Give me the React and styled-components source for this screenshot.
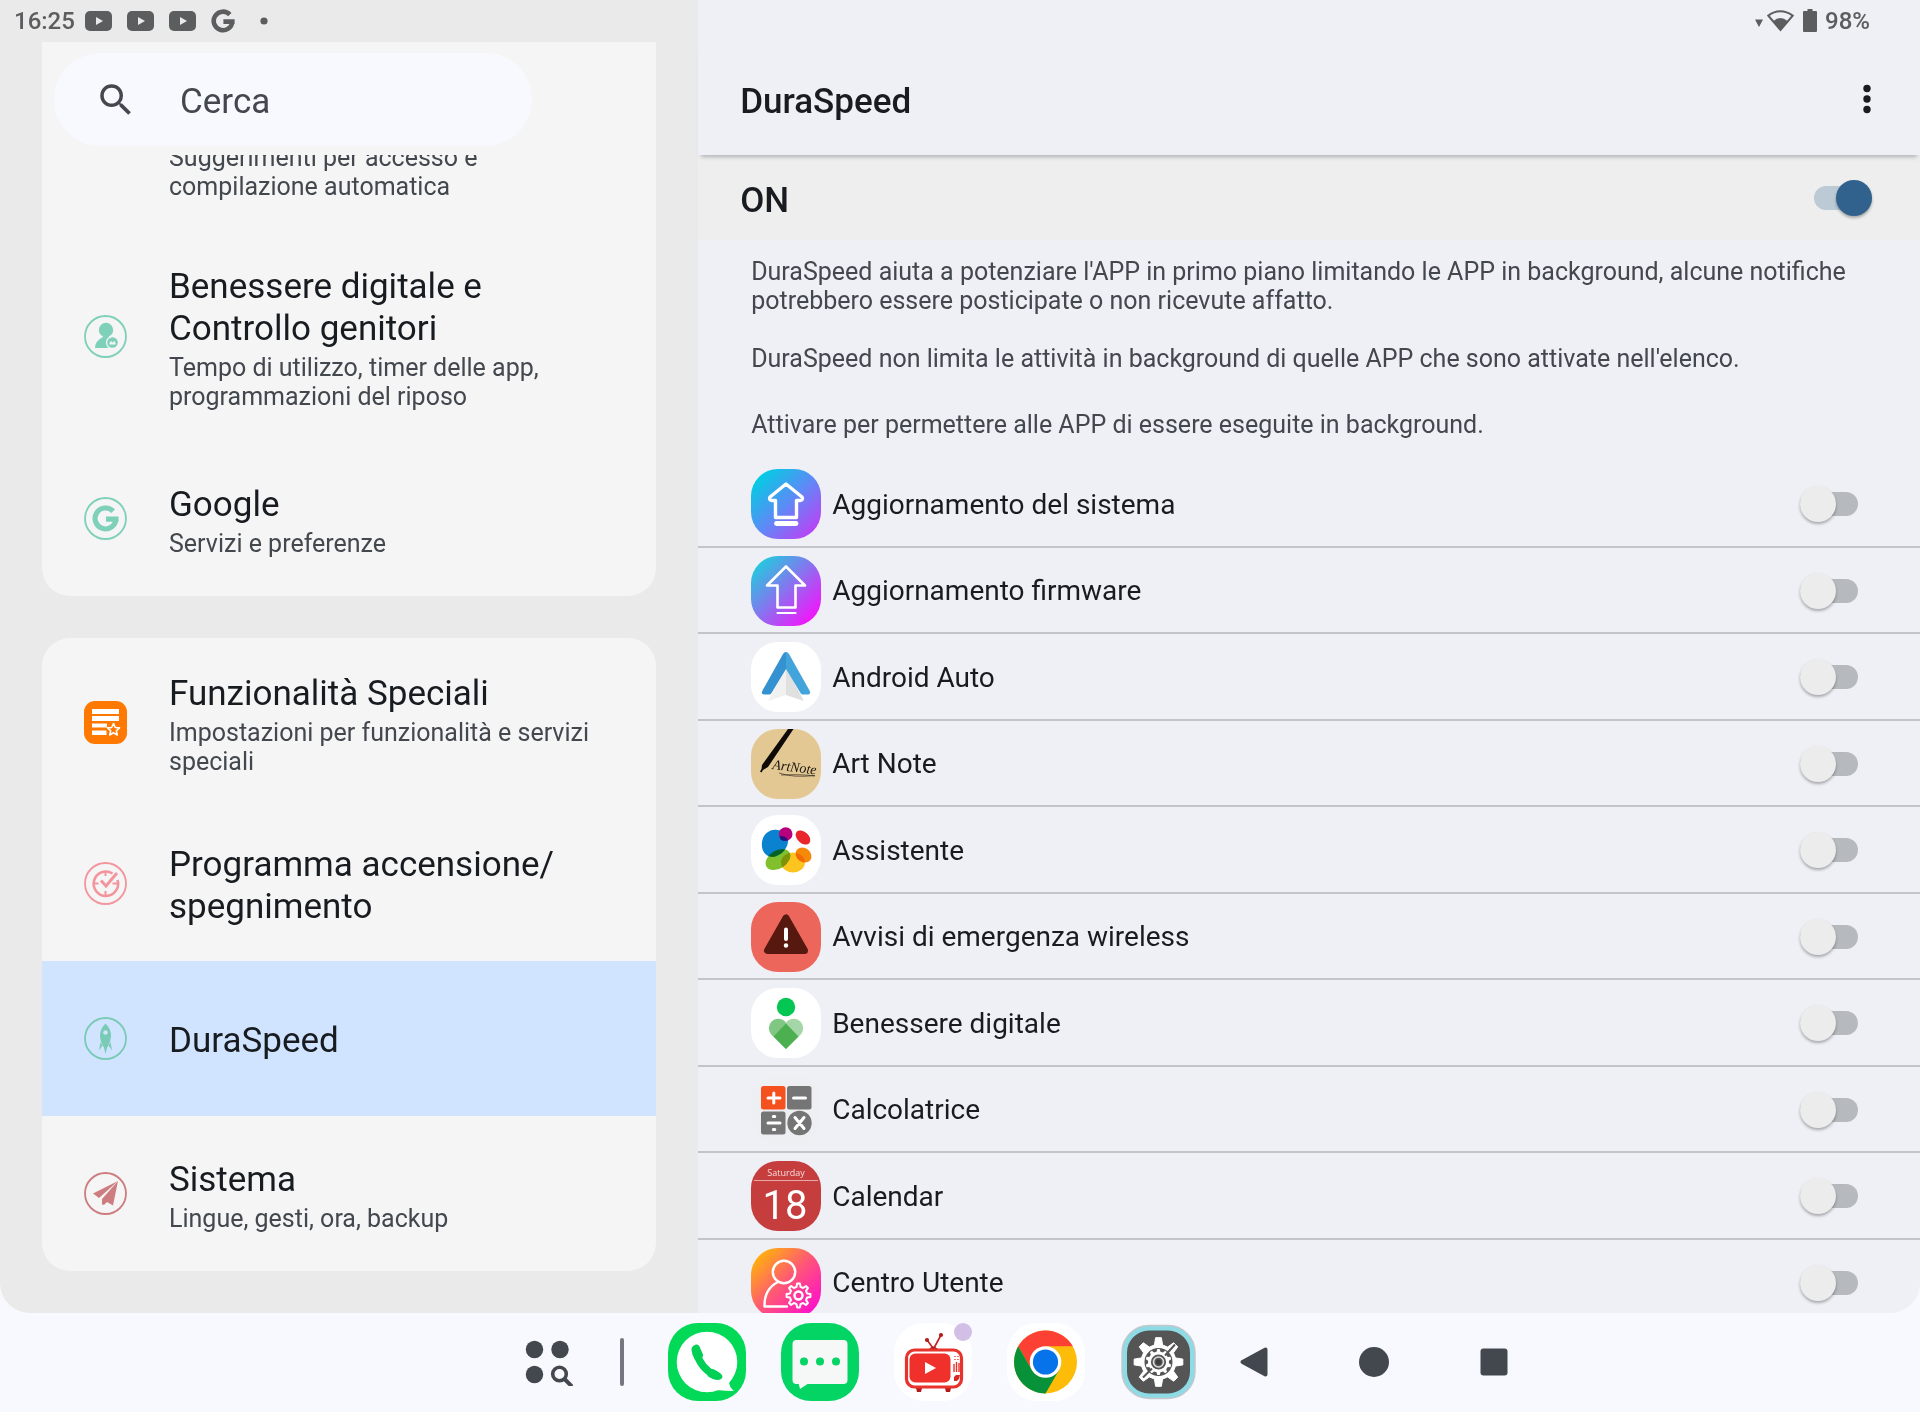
import React, { useState } from 'react'
import styled, { createGlobalStyle } from 'styled-components'

const GlobalStyle = createGlobalStyle`
* {
  box-sizing: border-box;
}
body {
  margin: 0;
  background: #f8f9ff;
  color: #181c20;
  font-family: Roboto, "Liberation Sans", sans-serif;
}
`

const Page = styled.div`
  height: 100vh;
  display: grid;
  grid-template-rows: minmax(0, 1fr) auto;
`
const Screen = styled.div`
  display: grid;
  grid-template-columns: 4fr 7fr;
  grid-template-rows: minmax(0, 1fr);
  border-radius: 0 0 30px 30px;
  overflow: hidden;
`
const StatusBar = styled.div`
  height: 42px;
  flex: none;
  display: flex;
  align-items: center;
  justify-content: ${props => (props.$end ? 'flex-end' : 'flex-start')};
  padding: ${props => (props.$end ? '0 50px 0 0' : '0 0 0 14px')};
  color: #5c5d5f;
  font-size: 24px;
  font-weight: 500;
  line-height: 29px;
`
const Notices = styled.div`
  display: flex;
  align-items: center;
  gap: 15px;
  padding-left: 10px;
`
const Signals = styled.div`
  display: flex;
  align-items: center;
  gap: 8px;
`

/* left pane */
const Sidebar = styled.aside`
  display: flex;
  flex-direction: column;
  min-width: 0;
  background: #eaeaea;
`
const SearchArea = styled.div`
  flex: none;
  margin: 0 42px;
  padding: 11px 124px 9px 12px;
  background: #f5f5f5;
`
const SearchBox = styled.label`
  height: 93px;
  display: flex;
  align-items: center;
  gap: 43px;
  padding: 0 41px;
  border-radius: 47px;
  background: #f8f9ff;
  color: #43474e;
`
const SearchInput = styled.input`
  flex: 1;
  min-width: 0;
  padding: 5px 0 0;
  border: 0;
  outline: 0;
  background: none;
  font-family: inherit;
  font-size: 35px;
  line-height: 42px;
  color: #43474e;
  &::placeholder {
    color: #43474e;
    opacity: 1;
  }
`
/* the list is scrolled to its end, the first entry is cut by the search area */
const Cards = styled.nav`
  flex: 1;
  min-height: 0;
  display: flex;
  flex-direction: column;
  justify-content: flex-end;
  gap: 42px;
  padding: 0 42px 42px;
  overflow: hidden;
`
const Card = styled.div`
  flex: none;
  border-radius: ${props => (props.$open ? '0 0 28px 28px' : '28px')};
  background: #f5f5f5;
  overflow: hidden;
`
const Item = styled.a`
  min-height: ${props => (props.$cut ? '0' : '155px')};
  display: flex;
  align-items: center;
  gap: 42px;
  padding: ${props => (props.$cut ? '0' : '30px')} 42px 30px;
  background: ${props => (props.$active ? '#d1e4ff' : 'transparent')};
  color: #181c20;
  text-decoration: none;
`
const ItemIcon = styled.span`
  width: 43px;
  flex: none;
  display: flex;
`
const ItemBody = styled.span`
  display: flex;
  flex-direction: column;
  gap: 3px;
  padding-top: 5px;
`
const ItemTitle = styled.span`
  font-size: 35px;
  line-height: 42px;
`
const ItemText = styled.span`
  font-size: 25px;
  line-height: 29px;
  color: #43474e;
`

/* right pane */
const Content = styled.main`
  display: flex;
  flex-direction: column;
  min-width: 0;
  background: #eff0f6;
`
const Header = styled.header`
  height: 113px;
  flex: none;
  display: flex;
  align-items: center;
  justify-content: space-between;
  padding: 0 32px 0 42px;
  z-index: 1;
  box-shadow: 0 5px 4px -3px rgba(0, 0, 0, 0.25);
`
const Title = styled.h1`
  margin: 0;
  padding-top: 6px;
  font-size: 35px;
  font-weight: 500;
  line-height: 42px;
`
const MenuButton = styled.button`
  display: flex;
  padding: 0;
  border: 0;
  background: none;
  color: #181c20;
`
const MasterBar = styled.label`
  height: 85px;
  flex: none;
  display: flex;
  align-items: center;
  justify-content: space-between;
  padding: 0 48px 0 42px;
  background: #eeeeee;
`
const MasterText = styled.span`
  padding-top: 6px;
  font-size: 35px;
  font-weight: 500;
  line-height: 42px;
`
const Notes = styled.div`
  flex: none;
  padding: 17px 50px 22px 53px;
  color: #43474e;
  font-size: 25px;
  line-height: 29px;
`
const Note = styled.p`
  margin: 0 0 ${props => props.$gap || 0}px;
`
const AppList = styled.ul`
  flex: 1;
  min-height: 0;
  display: grid;
  grid-auto-rows: minmax(86px, 1fr);
  margin: 0 0 -13px;
  padding: 0;
  list-style: none;
`
const AppItem = styled.li`
  border-bottom: 2px solid #c2c4ca;
`
const AppRow = styled.label`
  height: 100%;
  display: flex;
  align-items: center;
  gap: 11px;
  padding: 2px 62px 0 53px;
`
const AppName = styled.span`
  flex: 1;
  font-size: 28px;
  line-height: 33px;
`
const Switch = styled.input`
  appearance: none;
  width: 58px;
  height: 24px;
  flex: none;
  display: flex;
  align-items: center;
  justify-content: flex-start;
  margin: 0;
  border-radius: 12px;
  background: #b6b9be;
  &::before {
    content: "";
    width: 36px;
    height: 36px;
    flex: none;
    border-radius: 50%;
    background: #ececec;
    box-shadow: 0 2px 3px rgba(0, 0, 0, 0.3);
  }
  &:checked {
    justify-content: flex-end;
    background: #bccad6;
  }
  &:checked::before {
    background: #31628d;
  }
`

/* bottom bar */
const Taskbar = styled.footer`
  height: 99px;
  display: flex;
  align-items: center;
  justify-content: center;
  padding: 0 0 2px 119px;
  color: #43474e;
`
const Divider = styled.span`
  width: 4px;
  height: 48px;
  margin: 0 44px 0 47px;
  border-radius: 2px;
  background: #74777f;
`
const Dock = styled.div`
  display: flex;
  gap: 35px;
`
const NavKeys = styled.div`
  display: flex;
  gap: 80px;
  padding-left: 36px;
`
const IconButton = styled.button`
  display: flex;
  padding: 0;
  border: 0;
  background: none;
  color: inherit;
`

const gearPath = (cx, cy, teeth, outer, inner) => {
  const step = (Math.PI * 2) / teeth
  const at = (a, r) => `${(cx + Math.cos(a) * r).toFixed(2)} ${(cy + Math.sin(a) * r).toFixed(2)}`
  let d = ''
  for (let i = 0; i < teeth; i++) {
    const a = i * step - Math.PI / 2
    d += `${i ? 'L' : 'M'}${at(a - step * 0.3, inner)}L${at(a - step * 0.15, outer)}`
    d += `L${at(a + step * 0.15, outer)}L${at(a + step * 0.3, inner)}`
  }
  return d + 'Z'
}

const GLetter = ({ size, x, y }) => (
  <svg width={size} height={size} x={x} y={y} viewBox="0 0 24 24" fill="none" stroke="currentColor" strokeWidth="4.6">
    <path d="M18.8 5.6A9.3 9.3 0 1 0 21.3 12.6M12.4 12.6H23.6" />
  </svg>
)
const VideoNotice = () => (
  <svg width="27" height="20" viewBox="0 0 27 20">
    <rect width="27" height="20" rx="5" fill="currentColor" />
    <path d="M11 6v8l7-4z" fill="#eaeaea" />
  </svg>
)
const DotNotice = () => (
  <svg width="30" height="10" viewBox="0 0 30 10">
    <circle cx="14" cy="5" r="3.6" fill="currentColor" />
  </svg>
)
const WifiIcon = () => (
  <svg width="40" height="24" viewBox="0 0 40 24" fill="currentColor">
    <path d="M0 10.500h8l-4 7.500z" />
    <path d="M13.300 6.600Q25.500-2 37.700 6.600L25.500 21z" fill="none" stroke="currentColor" strokeWidth="2" />
    <path d="M18.500 12Q25.500 6 32.500 12L25.500 21z" />
  </svg>
)
const BatteryIcon = () => (
  <svg width="14" height="24" viewBox="0 0 14 24" fill="currentColor">
    <path d="M4.500 0h5v2H13a1 1 0 0 1 1 1v19a1 1 0 0 1-1 1H1a1 1 0 0 1-1-1V3a1 1 0 0 1 1-1h3.500z" />
  </svg>
)
const SearchIcon = () => (
  <svg width="42" height="42" viewBox="0 0 24 24" fill="currentColor">
    <path d="M15.500 14h-.790l-.280-.270A6.470 6.470 0 0 0 16 9.500 6.500 6.500 0 1 0 9.500 16c1.610 0 3.090-.590 4.230-1.570l.270.280v.790l5 4.990L20.490 19zm-6 0C7.010 14 5 11.990 5 9.500S7.010 5 9.500 5 14 7.010 14 9.500 11.990 14 9.500 14z" />
  </svg>
)
const MoreIcon = () => (
  <svg width="42" height="42" viewBox="0 0 42 42" fill="currentColor">
    <circle cx="21" cy="10.500" r="3.700" />
    <circle cx="21" cy="21" r="3.700" />
    <circle cx="21" cy="31.500" r="3.700" />
  </svg>
)

const Ring = ({ color, children }) => (
  <svg width="43" height="43" viewBox="0 0 43 43" color={color} fill="currentColor">
    <circle cx="21.500" cy="21.500" r="20.500" fill="none" stroke="currentColor" strokeWidth="1.800" />
    {children}
  </svg>
)
const WellbeingIcon = () => (
  <Ring color="#7fd0b9">
    <circle cx="22" cy="15" r="7.200" />
    <path d="M19 20h6v4l4 9H11q0-7 8-11z" />
    <circle cx="28.500" cy="27.500" r="6.600" fill="#f5f5f5" />
    <circle cx="28.500" cy="27.500" r="5.300" />
    <path d="M25.500 28.500h6M27 26.500v2.500M30 26.500v2.500" stroke="#f5f5f5" strokeWidth="1.800" />
  </Ring>
)
const GoogleIcon = () => (
  <Ring color="#7fd0b9">
    <GLetter size="27" x="8" y="8" />
  </Ring>
)
const FeaturesIcon = () => (
  <svg width="43" height="43" viewBox="0 0 43 43">
    <rect width="43" height="43" rx="11" fill="#ff7900" />
    <path d="M8 8h27v5H8zM8 15h27v5H8zM8 22.500h15v4H8zM8 29.500h14.500v4.500H8z" fill="#fff" />
    <path d="M29.500 22.500l1.800 4 4.200.400-3.200 2.900 1 4.200-3.800-2.200-3.800 2.200 1-4.200-3.200-2.900 4.200-.400z" fill="#ff7900" stroke="#fff" strokeWidth="1.600" strokeLinejoin="round" />
  </svg>
)
const ClockIcon = () => (
  <Ring color="#f2959c">
    <g fill="none" stroke="currentColor" strokeWidth="2.600">
      <path d="M28.500 11.500A12.200 12.200 0 1 0 33.500 18" />
      <path d="M21.500 9v5M21.500 29v5M9.500 21.500h5M28.500 21.500h5" strokeWidth="2" />
      <path d="M17 18.500l5 5.500L33 11" strokeWidth="3" />
    </g>
  </Ring>
)
const RocketIcon = () => (
  <Ring color="#79cbb5">
    <path d="M21.500 6.500c4 4 5.500 8 5.500 12 0 4-1.500 8-3.500 11.500h-4C17.500 26.500 16 22.500 16 18.500c0-4 1.500-8 5.500-12z" />
    <path d="M16.500 25l-1.500 8.500 3.500-5zM26.500 25l1.500 8.500-3.500-5zM19.500 29h4l-2 8z" />
    <circle cx="21.500" cy="15.500" r="2.300" fill="#d1e4ff" />
  </Ring>
)
const PlaneIcon = () => (
  <Ring color="#cd7d80">
    <path d="M34 9L9 21.500l6 4.500z" />
    <path d="M34 9L18 27v5.500q2 1 3.500-1l1.500-1.500 6 3.500z" />
  </Ring>
)

const Tile = ({ fill, children }) => (
  <svg width="70" height="70" viewBox="0 0 70 70">
    <rect width="70" height="70" rx="27" fill={fill} />
    {children}
  </svg>
)
const Gradient = ({ id, stops }) => (
  <linearGradient id={id} x1="0.1" y1="0.1" x2="0.9" y2="0.9">
    {stops.map((color, i) => (
      <stop key={color} offset={i / (stops.length - 1)} stopColor={color} />
    ))}
  </linearGradient>
)
const SystemUpdateIcon = () => (
  <Tile fill="url(#system)">
    <Gradient id="system" stops={['#00cee2', '#5b8cf6', '#bb42f6']} />
    <g fill="none" stroke="#fff" strokeLinejoin="round" strokeLinecap="round">
      <path d="M35 15L51 28q1.500 3-2 3.500h-3.500V48.500h-21V31.500H21q-3.500-.500-2-3.500z" strokeWidth="3.400" />
      <path d="M25.500 54.500h19.500" strokeWidth="4.800" />
    </g>
  </Tile>
)
const FirmwareIcon = () => (
  <Tile fill="url(#firmware)">
    <Gradient id="firmware" stops={['#22cade', '#8c70f0', '#f513fb']} />
    <g fill="none" stroke="#fff" strokeLinejoin="round" strokeLinecap="round">
      <path d="M35 10.500L54 29.500H44.500V51.500H26.500V29.500H16z" strokeWidth="2.600" />
      <path d="M26.500 57h18" strokeWidth="2.200" />
    </g>
  </Tile>
)
const AndroidAutoIcon = () => (
  <Tile fill="#fff">
    <path d="M35 26L17 59l18-6z" fill="#f1f1f1" />
    <path d="M35 26l18 33-18-6z" fill="#e0e0e0" />
    <path d="M32 12q1.200-2 3-2V27L20.500 51q-.800 1.500-2.500 1.500h-4.500q-4 0-2-4z" fill="#3592d0" />
    <path d="M38 12q-1.200-2-3-2V27L49.500 51q.800 1.500 2.500 1.500h4.500q4 0 2-4z" fill="#43a4dc" />
  </Tile>
)
const ArtNoteIcon = () => (
  <Tile fill="#e4c893">
    <path d="M37 0h5.500L17 38l-5 3-1.500 2.500-1.500-1 1.500-2.500.500-4z" fill="#0d0a08" />
    <text x="21" y="40" transform="rotate(7 21 40)" fontFamily="Liberation Serif, serif" fontStyle="italic" fontSize="14" fill="#1c1814">ArtNote</text>
    <path d="M28 44q14 5 36 2.500M30 46q20-1 34 1" fill="none" stroke="#1c1814" strokeWidth="0.600" />
  </Tile>
)
const blend = { mixBlendMode: 'multiply' }
const AssistantIcon = () => (
  <Tile fill="#fff">
    <path d="M11 27c1-8 8-13 15-12 8 0 12 5 11 12-1 8-8 14-15 15-8 0-12-7-11-15z" fill="#0a82d0" />
    <circle cx="34.700" cy="19" r="6.800" fill="#b6007c" />
    <path d="M28.500 21.500a6.800 6.800 0 0 1 8.500 3.800q-3 1-6 .200-2.500-1.500-2.500-4z" fill="#27127c" />
    <ellipse cx="52" cy="22.500" rx="8.500" ry="5.600" transform="rotate(42 52 22.500)" fill="#e8262b" />
    <ellipse cx="27" cy="44.500" rx="13.500" ry="9" transform="rotate(-32 27 44.500)" fill="#7fc02c" style={blend} />
    <ellipse cx="42" cy="47.500" rx="12" ry="10" fill="#fcc41f" style={blend} />
    <ellipse cx="52.500" cy="40" rx="8.500" ry="7" transform="rotate(38 52.500 40)" fill="#f58a0a" style={blend} />
  </Tile>
)
const AlertIcon = () => (
  <Tile fill="#ed665b">
    <path d="M35 16L16.500 48.500h37z" fill="#57180f" stroke="#57180f" strokeWidth="7" strokeLinejoin="round" />
    <path d="M35 27.500v9.500" stroke="#fff" strokeWidth="4" strokeLinecap="round" />
    <circle cx="35" cy="43.500" r="2.200" fill="#fff" />
  </Tile>
)
const DigitalWellbeingIcon = () => (
  <Tile fill="#fff">
    <circle cx="35" cy="19" r="9.200" fill="#04c653" />
    <path d="M35 61L19.800 46A9.500 9.500 0 0 1 33 32.600L35 34.600z" fill="#81c784" />
    <path d="M35 61L50.200 46A9.500 9.500 0 0 0 37 32.600L35 34.600z" fill="#a5d6a7" />
    <path d="M35 35.500L47.500 48.500 35 61 22.500 48.500z" fill="#4caf50" />
  </Tile>
)
const CalculatorIcon = () => (
  <Tile fill="#eeeff2">
    <rect x="10" y="11" width="24.500" height="23.500" rx="2.500" fill="#f4511e" />
    <rect x="36" y="11" width="24.500" height="23.500" rx="2.500" fill="#757575" />
    <rect x="10" y="36.500" width="24.500" height="23" rx="2.500" fill="#757575" />
    <circle cx="48.500" cy="48" r="12.200" fill="#757575" />
    <path d="M17 23h12M22.800 18v10M42.500 23h12M17 48h12M22.300 41.500h1.500M22.300 54.500h1.500M44 42.500l9 11M53 42.500l-9 11" stroke="#fff" strokeWidth="3" strokeLinecap="round" />
  </Tile>
)
const CalendarIcon = () => (
  <Tile fill="#c53d3d">
    <text x="35" y="15" textAnchor="middle" fontFamily="Open Sans, sans-serif" fontSize="9" fill="#f6dcdc">Saturday</text>
    <path d="M3 19.500h64" stroke="#e9a9a9" />
    <text x="34" y="58" textAnchor="middle" fontFamily="Roboto, sans-serif" fontSize="40" fill="#fff">18</text>
  </Tile>
)
const UserCenterIcon = () => (
  <Tile fill="url(#user)">
    <Gradient id="user" stops={['#ffb10c', '#ff5578', '#ff10ca']} />
    <g fill="none" stroke="#fff" strokeWidth="2.400" strokeLinejoin="round" strokeLinecap="round">
      <circle cx="33" cy="24" r="11.200" />
      <path d="M27 34Q13 41 13.500 58.500H36" />
      <path d={gearPath(47.500, 47.500, 8, 12, 8.800)} strokeWidth="2" />
      <circle cx="47.500" cy="47.500" r="4" />
    </g>
  </Tile>
)

const DockTile = ({ fill, children }) => (
  <svg width="78" height="78" viewBox="0 0 78 78">
    <rect width="78" height="78" rx="30" fill={fill} />
    {children}
  </svg>
)
const PhoneIcon = () => (
  <DockTile fill="#02d956">
    <circle cx="39" cy="39" r="30.300" fill="#fff" />
    <path d="M49 67q8 1 17 1-5-4-5-10z" fill="#fff" />
    <path d="M28.500 29Q32 45 48 53" fill="none" stroke="#02d056" strokeWidth="7.500" />
    <path d="M23.500 27q-.500-4 4.500-5.500 2.500-.500 3.500 2l3.500 8q.500 2.500-3 4.500l-5 1q-3-5-3.500-10zM54 52q-2.500-3-9-6-2.500-.500-4.500 3l-1 4q6 4 10 4 4 0 5-3z" fill="#02d056" />
  </DockTile>
)
const MessagesIcon = () => (
  <DockTile fill="#03d464">
    <rect x="11.500" y="17" width="55" height="44" rx="4" fill="#f5f8f7" />
    <path d="M17.500 60l1.500 6 9-6z" fill="#f5f8f7" />
    <g fill="#03d464">
      <circle cx="23" cy="38.500" r="4" />
      <circle cx="39" cy="38.500" r="4" />
      <circle cx="55" cy="38.500" r="4" />
    </g>
  </DockTile>
)
const TvIcon = () => (
  <DockTile fill="#fff">
    <path d="M33 17l6 8M47 12l-7 13" stroke="#c41f1f" strokeWidth="1.600" />
    <circle cx="33" cy="17" r="2.100" fill="#b51a1a" />
    <circle cx="47" cy="12" r="2.100" fill="#b51a1a" />
    <path d="M35 26q4-5 9 0zM22 65h6l-1 4h-4zM51 65h6l-1 4h-4z" fill="#b51a1a" />
    <rect x="12.500" y="27" width="55" height="37" rx="8" fill="#fff" stroke="#e7332c" strokeWidth="3.200" />
    <rect x="15.500" y="30.500" width="41" height="29" rx="6" fill="#f0312b" />
    <path d="M31 39v12l11-6z" fill="#fff" />
    <path d="M61 33v1M61 36v1M64 33v1M64 36v1M60 41v8M62.500 39v10M65 40v9" stroke="#e7332c" strokeWidth="1.400" />
    <path d="M60 54l2-2h4l-1 4-2 2h-3z" fill="#d62a25" />
    <circle cx="69" cy="9" r="9" fill="#d2bfe5" />
  </DockTile>
)
const ChromeIcon = () => (
  <DockTile fill="#fff">
    <circle cx="38.500" cy="39" r="31.500" fill="#fdbc08" />
    <path d="M11.200 23.300A31.500 31.500 0 0 1 65.800 23.300H38.500L24.900 46.900z" fill="#fc4134" />
    <path d="M11.200 23.300A31.500 31.500 0 0 0 38.500 70.500L52.100 46.900 24.900 46.900z" fill="#079239" />
    <circle cx="38.500" cy="39" r="15.800" fill="#fff" />
    <circle cx="38.500" cy="39" r="12.600" fill="#0673ea" />
  </DockTile>
)
const SettingsIcon = () => (
  <svg width="78" height="78" viewBox="0 0 78 78">
    <rect x="2" y="2.500" width="73" height="73" rx="27" fill="#8cdbe5" stroke="#c3c8cc" strokeWidth="1.500" />
    <rect x="7" y="7.500" width="63" height="63" rx="22" fill="#555" />
    <path d={gearPath(38.500, 39, 8, 24.500, 17.500)} fill="#fff" stroke="#fff" strokeWidth="1" strokeLinejoin="round" />
    <circle cx="38.500" cy="39" r="14" fill="#555" />
    <path d={gearPath(38.500, 39, 10, 13, 10.500)} fill="#fff" />
    <path d="M23 54.500L32 45.500M45 32.500L55 21.500" stroke="#555" strokeWidth="2" />
    <circle cx="38.500" cy="39" r="7.600" fill="#555" />
    <circle cx="38.500" cy="39" r="5" fill="none" stroke="#ddd" strokeWidth="1.600" />
    <circle cx="38.500" cy="39" r="2.600" fill="#3c3c3c" />
  </svg>
)
const AllAppsIcon = () => (
  <svg width="48" height="48" viewBox="0 0 48 48" fill="currentColor">
    <circle cx="9.500" cy="11.500" r="8.700" />
    <circle cx="35" cy="11.500" r="8.700" />
    <circle cx="9.500" cy="36.500" r="8.700" />
    <circle cx="34.500" cy="36" r="6.800" fill="none" stroke="currentColor" strokeWidth="3.600" />
    <path d="M39.500 41l7.500 7.500" stroke="currentColor" strokeWidth="4" />
  </svg>
)
const BackIcon = () => (
  <svg width="40" height="40" viewBox="0 0 40 40">
    <path d="M8.500 20L31.500 7.500V32.500z" fill="currentColor" stroke="currentColor" strokeWidth="4" strokeLinejoin="round" />
  </svg>
)
const HomeIcon = () => (
  <svg width="40" height="40" viewBox="0 0 40 40">
    <circle cx="20" cy="20" r="15" fill="currentColor" />
  </svg>
)
const RecentIcon = () => (
  <svg width="40" height="40" viewBox="0 0 40 40">
    <rect x="6.500" y="6.500" width="27" height="27" rx="3" fill="currentColor" />
  </svg>
)

const general = [
  { id: 'passwords', text: 'Suggerimenti per accesso e compilazione automatica', cut: true },
  { id: 'wellbeing', icon: <WellbeingIcon />, title: 'Benessere digitale e Controllo genitori', text: 'Tempo di utilizzo, timer delle app, programmazioni del riposo' },
  { id: 'google', icon: <GoogleIcon />, title: 'Google', text: 'Servizi e preferenze' },
]
const system = [
  { id: 'features', icon: <FeaturesIcon />, title: 'Funzionalità Speciali', text: 'Impostazioni per funzionalità e servizi speciali' },
  { id: 'power', icon: <ClockIcon />, title: <>Programma accensione/<wbr />spegnimento</> },
  { id: 'duraspeed', icon: <RocketIcon />, title: 'DuraSpeed', active: true },
  { id: 'system', icon: <PlaneIcon />, title: 'Sistema', text: 'Lingue, gesti, ora, backup' },
]
const apps = [
  { name: 'Aggiornamento del sistema', icon: <SystemUpdateIcon /> },
  { name: 'Aggiornamento firmware', icon: <FirmwareIcon /> },
  { name: 'Android Auto', icon: <AndroidAutoIcon /> },
  { name: 'Art Note', icon: <ArtNoteIcon /> },
  { name: 'Assistente', icon: <AssistantIcon /> },
  { name: 'Avvisi di emergenza wireless', icon: <AlertIcon /> },
  { name: 'Benessere digitale', icon: <DigitalWellbeingIcon /> },
  { name: 'Calcolatrice', icon: <CalculatorIcon /> },
  { name: 'Calendar', icon: <CalendarIcon /> },
  { name: 'Centro Utente', icon: <UserCenterIcon /> },
]

const SettingsItem = ({ icon, title, text, active, cut }) => (
  <Item href="#" $active={active} $cut={cut}>
    <ItemIcon>{icon}</ItemIcon>
    <ItemBody>
      {title && <ItemTitle>{title}</ItemTitle>}
      {text && <ItemText>{text}</ItemText>}
    </ItemBody>
  </Item>
)

const App = () => {
  const [on, setOn] = useState(true)

  return (
    <Page>
      <GlobalStyle />
      <Screen>
        <Sidebar>
          <StatusBar>
            16:25
            <Notices>
              <VideoNotice />
              <VideoNotice />
              <VideoNotice />
              <GLetter size="24" />
              <DotNotice />
            </Notices>
          </StatusBar>
          <SearchArea>
            <SearchBox>
              <SearchIcon />
              <SearchInput type="text" placeholder="Cerca" aria-label="Cerca" />
            </SearchBox>
          </SearchArea>
          <Cards>
            <Card $open>
              {general.map(({ id, ...item }) => <SettingsItem key={id} {...item} />)}
            </Card>
            <Card>
              {system.map(({ id, ...item }) => <SettingsItem key={id} {...item} />)}
            </Card>
          </Cards>
        </Sidebar>
        <Content>
          <StatusBar $end>
            <Signals>
              <WifiIcon />
              <BatteryIcon />
              98%
            </Signals>
          </StatusBar>
          <Header>
            <Title>DuraSpeed</Title>
            <MenuButton aria-label="Altre opzioni">
              <MoreIcon />
            </MenuButton>
          </Header>
          <MasterBar>
            <MasterText>ON</MasterText>
            <Switch type="checkbox" checked={on} onChange={e => setOn(e.target.checked)} />
          </MasterBar>
          <Notes>
            <Note $gap={29}>
              DuraSpeed aiuta a potenziare l'APP in primo piano limitando le APP in background, alcune notifiche potrebbero essere posticipate o non ricevute affatto.
            </Note>
            <Note $gap={37}>
              DuraSpeed non limita le attività in background di quelle APP che sono attivate nell'elenco.
            </Note>
            <Note>Attivare per permettere alle APP di essere eseguite in background.</Note>
          </Notes>
          <AppList>
            {apps.map(app => (
              <AppItem key={app.name}>
                <AppRow>
                  {app.icon}
                  <AppName>{app.name}</AppName>
                  <Switch type="checkbox" />
                </AppRow>
              </AppItem>
            ))}
          </AppList>
        </Content>
      </Screen>
      <Taskbar>
        <IconButton aria-label="Tutte le app"><AllAppsIcon /></IconButton>
        <Divider />
        <Dock>
          <IconButton aria-label="Telefono"><PhoneIcon /></IconButton>
          <IconButton aria-label="Messaggi"><MessagesIcon /></IconButton>
          <IconButton aria-label="TV"><TvIcon /></IconButton>
          <IconButton aria-label="Chrome"><ChromeIcon /></IconButton>
          <IconButton aria-label="Impostazioni"><SettingsIcon /></IconButton>
        </Dock>
        <NavKeys>
          <IconButton aria-label="Indietro"><BackIcon /></IconButton>
          <IconButton aria-label="Home"><HomeIcon /></IconButton>
          <IconButton aria-label="Recenti"><RecentIcon /></IconButton>
        </NavKeys>
      </Taskbar>
    </Page>
  )
}

export default App
